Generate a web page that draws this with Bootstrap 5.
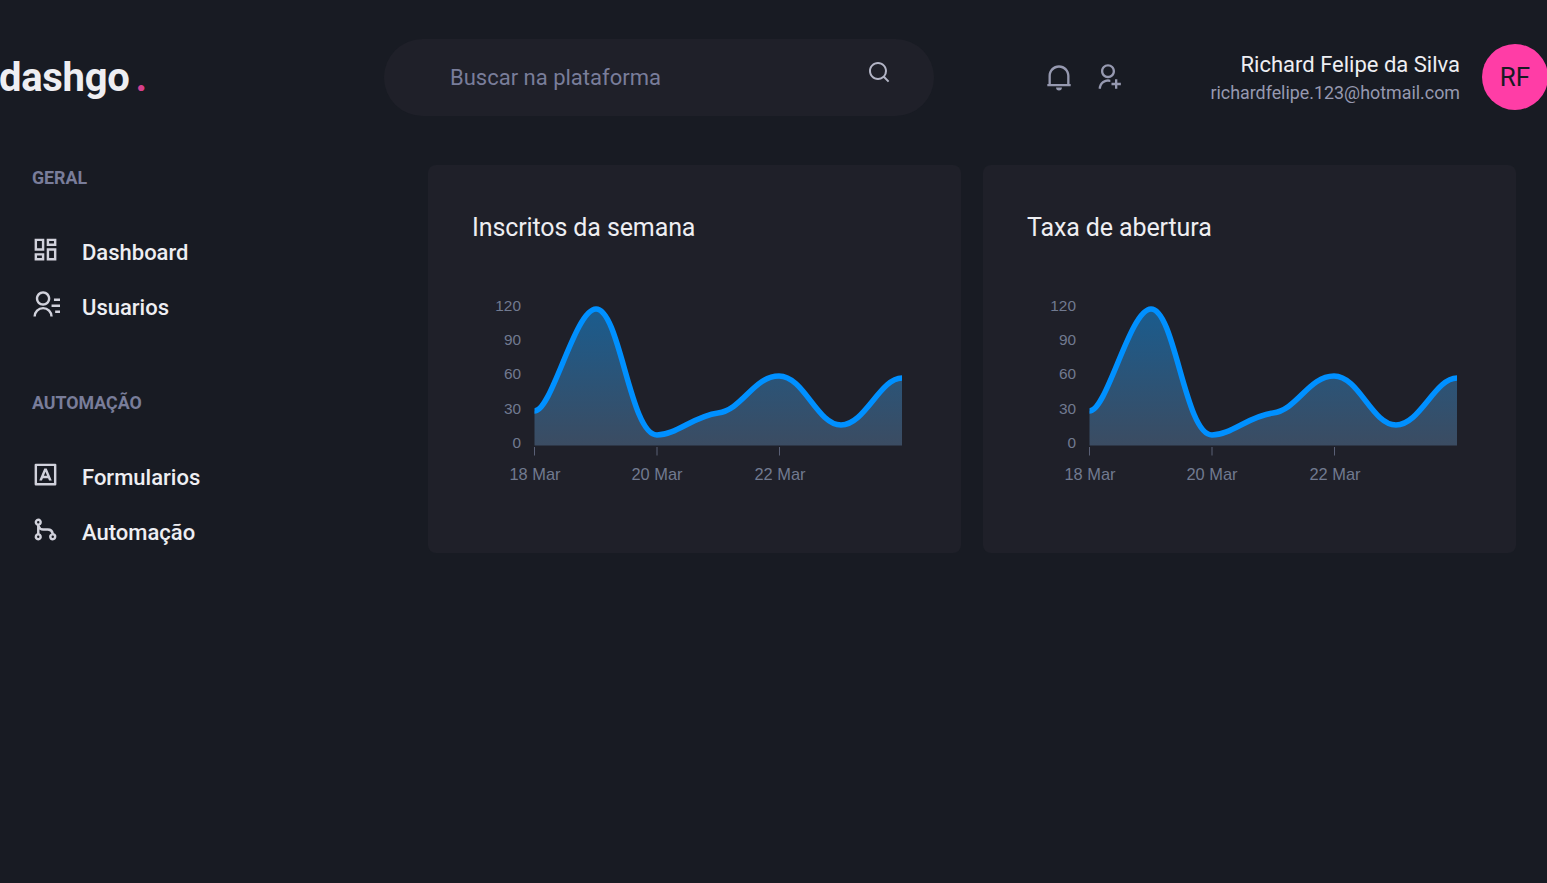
<!DOCTYPE html>
<html lang="pt-BR">
<head>
    <meta charset="UTF-8">
    <meta name="viewport" content="width=device-width, initial-scale=1.0">
    <title>dashgo</title>
    <link href="https://cdn.jsdelivr.net/npm/bootstrap@5.3.0/dist/css/bootstrap.min.css" rel="stylesheet">
    <style>
        html, body { height: 100%; overflow: hidden; }
        body { background: #181b23; color: #eeeef2; font-family: Roboto, "Liberation Sans", sans-serif; }
        .topbar { height: 77px; margin-top: 39px; }
        .logo-box { width: 384px; }
        .logo { font-size: 40px; font-weight: 700; letter-spacing: -0.3px; line-height: 1; margin-left: -1px; color: #eeeef2; }
        .logo span { color: #d53f8c; margin-left: 6px; }
        .search-box { width: 550px; height: 77px; border-radius: 39px; background: #1f2029; padding: 0 43px 0 66px; }
        .search-box input { background: transparent; border: 0; outline: 0; color: #eeeef2; font-size: 22px; width: 100%; padding: 0; }
        .search-box input::placeholder { color: #797d9a; opacity: 1; }
        .search-box svg { width: 24px; height: 24px; fill: #b3b5c6; margin-top: -12px; flex-shrink: 0; }
        .top-icons { margin-left: 111px; margin-bottom: 2px; gap: 21px; }
        .top-icons svg { width: 28px; height: 28px; fill: #9699b0; }
        .user-box { margin-left: auto; margin-right: -1px; gap: 22px; }
        .user-text { margin-top: 2px; }
        .user-name { font-size: 22px; line-height: 26px; color: #eeeef2; }
        .user-mail { font-size: 17.86px; line-height: 26px; margin-top: 2px; color: #9699b0; }
        .avatar { width: 66px; height: 66px; margin-bottom: 2px; padding-top: 2px; background: #ff3da6; color: #181b23; font-size: 26px; }
        .sidebar { width: 428px; padding: 48px 0 0 32px; flex-shrink: 0; }
        .side-title { font-size: 17.8px; font-weight: 700; line-height: 28px; color: #797d9a; margin-bottom: 33px; }
        .side-group { margin-bottom: 54px; }
        .side-link { height: 55px; gap: 22px; color: #eeeef2; font-size: 22px; font-weight: 500; text-decoration: none; }
        .side-link svg { width: 29px; height: 29px; fill: #d1d2dc; margin: -7px 0 0 -1px; flex-shrink: 0; }
        .content { gap: 22px; padding: 49px 32px 0 0; }
        .chart-card { flex: 1 1 0; height: 388px; background: #1f2029; border: 0; border-radius: 8px; padding: 44px; }
        .chart-card h2 { font-size: 25px; letter-spacing: -0.11px; font-weight: 400; line-height: 38px; color: #eeeef2; margin: 0 0 43px; }
        .chart { width: 445px; height: 200px; overflow: visible; display: block; }
        .chart text { font-family: "Liberation Sans", Arial, sans-serif; fill: #717a90; }
        .chart .y { font-size: 15.4px; text-anchor: end; }
        .chart .x { font-size: 16.4px; text-anchor: middle; }
        .chart .tick { stroke: #5a6076; stroke-width: 1; }
        .chart .line { fill: none; stroke: #0090ff; stroke-width: 5.5; }
    </style>
</head>
<body>
    <header class="topbar d-flex align-items-center">
        <div class="logo-box">
            <div class="logo">dashgo<span>.</span></div>
        </div>
        <div class="search-box d-flex align-items-center">
            <input type="text" placeholder="Buscar na plataforma">
            <svg viewBox="0 0 24 24"><path d="M18.031 16.617l4.283 4.282-1.415 1.415-4.282-4.283A8.96 8.96 0 0 1 11 20c-4.968 0-9-4.032-9-9s4.032-9 9-9 9 4.032 9 9a8.96 8.96 0 0 1-1.969 5.617zm-2.006-.742A6.977 6.977 0 0 0 18 11c0-3.868-3.142-7-7-7-3.867 0-7 3.132-7 7 0 3.858 3.133 7 7 7a6.977 6.977 0 0 0 4.875-1.975l.15-.15z"/></svg>
        </div>
        <div class="top-icons d-flex align-items-center">
            <svg viewBox="0 0 24 24"><path d="M22 20H2v-2h1v-6.969C3 6.043 7.03 2 12 2s9 4.043 9 9.031V18h1v2zM5 18h14v-6.969C19 7.148 15.866 4 12 4s-7 3.148-7 7.031V18zm4.5 3h5a2.5 2.5 0 1 1-5 0z"/></svg>
            <svg viewBox="0 0 24 24"><path d="M14 14.252v2.09A6 6 0 0 0 6 22l-2-.001a8 8 0 0 1 10-7.748zM12 13c-3.315 0-6-2.685-6-6s2.685-6 6-6 6 2.685 6 6-2.685 6-6 6zm0-2c2.21 0 4-1.79 4-4s-1.79-4-4-4-4 1.79-4 4 1.79 4 4 4zm6 6v-3h2v3h3v2h-3v3h-2v-3h-3v-2h3z"/></svg>
        </div>
        <div class="user-box d-flex align-items-center">
            <div class="user-text text-end">
                <div class="user-name">Richard Felipe da Silva</div>
                <div class="user-mail">richardfelipe.123@hotmail.com</div>
            </div>
            <div class="avatar rounded-circle d-flex align-items-center justify-content-center">RF</div>
        </div>
    </header>

    <div class="d-flex">
        <aside class="sidebar">
            <div class="side-group">
                <div class="side-title">GERAL</div>
                <a class="side-link d-flex align-items-center" href="#">
                    <svg viewBox="0 0 24 24"><path d="M13 21V11h8v10h-8zM3 13V3h8v10H3zm6-2V5H5v6h4zM3 21v-6h8v6H3zm2-2h4v-2H5v2zm10 0h4v-6h-4v6zM13 3h8v6h-8V3zm2 2v2h4V5h-4z"/></svg>
                    Dashboard
                </a>
                <a class="side-link d-flex align-items-center" href="#">
                    <svg viewBox="0 0 24 24"><path d="M19 7h5v2h-5V7zm-2 5h7v2h-7v-2zm3 5h4v2h-4v-2zM2 22a8 8 0 1 1 16 0h-2a6 6 0 1 0-12 0H2zm8-9c-3.315 0-6-2.685-6-6s2.685-6 6-6 6 2.685 6 6-2.685 6-6 6zm0-2c2.21 0 4-1.79 4-4s-1.79-4-4-4-4 1.79-4 4 1.79 4 4 4z"/></svg>
                    Usuarios
                </a>
            </div>
            <div class="side-group">
                <div class="side-title">AUTOMAÇÃO</div>
                <a class="side-link d-flex align-items-center" href="#">
                    <svg viewBox="0 0 24 24"><path d="M5 5v14h14V5H5zM4 3h16a1 1 0 0 1 1 1v16a1 1 0 0 1-1 1H4a1 1 0 0 1-1-1V4a1 1 0 0 1 1-1zm5.869 12l-.82 2H6.833L11 7h2l4.167 10H14.95l-.82-2H9.87zm.82-2h2.622L12 9.8 10.689 13z"/></svg>
                    Formularios
                </a>
                <a class="side-link d-flex align-items-center" href="#">
                    <svg viewBox="0 0 24 24"><path d="M7.105 8.79A3.001 3.001 0 0 0 10 11h4a5.001 5.001 0 0 1 4.927 4.146A3.001 3.001 0 0 1 18 21a3 3 0 0 1-1.105-5.79A3.001 3.001 0 0 0 14 13h-4a4.978 4.978 0 0 1-3-1v3.17a3.001 3.001 0 1 1-2 0V8.83a3.001 3.001 0 1 1 2.105-.04zM6 7a1 1 0 1 0 0-2 1 1 0 0 0 0 2zm0 12a1 1 0 1 0 0-2 1 1 0 0 0 0 2zm12 0a1 1 0 1 0 0-2 1 1 0 0 0 0 2z"/></svg>
                    Automação
                </a>
            </div>
        </aside>

        <main class="content d-flex flex-grow-1 align-items-start">
            <div class="card chart-card">
                <h2>Inscritos da semana</h2>
                <svg class="chart" viewBox="0 0 445 200">
                    <defs>
                        <linearGradient id="area1" gradientUnits="userSpaceOnUse" x1="0" y1="18" x2="0" y2="155">
                            <stop offset="0" stop-color="#1a5c8e"/>
                            <stop offset="1" stop-color="#3b4c62"/>
                        </linearGradient>
                    </defs>
                    <text class="y" x="49" y="21">120</text>
                    <text class="y" x="49" y="55">90</text>
                    <text class="y" x="49" y="89">60</text>
                    <text class="y" x="49" y="124">30</text>
                    <text class="y" x="49" y="158">0</text>
                    <path fill="url(#area1)" d="M62.5 121C80 121 103 19 124 19C148 19 158 145 185 145C204 145 222 126 246 123C270 120 282 86 307 86C332 86 345 135 369 135C393 135 408 88 430 88V155.5H62.5Z"/>
                    <path class="line" d="M62.5 121C80 121 103 19 124 19C148 19 158 145 185 145C204 145 222 126 246 123C270 120 282 86 307 86C332 86 345 135 369 135C393 135 408 88 430 88"/>
                    <path class="tick" d="M62.5 157v8.5M185 157v8.5M307.5 157v8.5"/>
                    <text class="x" x="63" y="190">18 Mar</text>
                    <text class="x" x="185" y="190">20 Mar</text>
                    <text class="x" x="308" y="190">22 Mar</text>
                </svg>
            </div>
            <div class="card chart-card">
                <h2>Taxa de abertura</h2>
                <svg class="chart" viewBox="0 0 445 200">
                    <defs>
                        <linearGradient id="area2" gradientUnits="userSpaceOnUse" x1="0" y1="18" x2="0" y2="155">
                            <stop offset="0" stop-color="#1a5c8e"/>
                            <stop offset="1" stop-color="#3b4c62"/>
                        </linearGradient>
                    </defs>
                    <text class="y" x="49" y="21">120</text>
                    <text class="y" x="49" y="55">90</text>
                    <text class="y" x="49" y="89">60</text>
                    <text class="y" x="49" y="124">30</text>
                    <text class="y" x="49" y="158">0</text>
                    <path fill="url(#area2)" d="M62.5 121C80 121 103 19 124 19C148 19 158 145 185 145C204 145 222 126 246 123C270 120 282 86 307 86C332 86 345 135 369 135C393 135 408 88 430 88V155.5H62.5Z"/>
                    <path class="line" d="M62.5 121C80 121 103 19 124 19C148 19 158 145 185 145C204 145 222 126 246 123C270 120 282 86 307 86C332 86 345 135 369 135C393 135 408 88 430 88"/>
                    <path class="tick" d="M62.5 157v8.5M185 157v8.5M307.5 157v8.5"/>
                    <text class="x" x="63" y="190">18 Mar</text>
                    <text class="x" x="185" y="190">20 Mar</text>
                    <text class="x" x="308" y="190">22 Mar</text>
                </svg>
            </div>
        </main>
    </div>

    <script src="https://cdn.jsdelivr.net/npm/bootstrap@5.3.0/dist/js/bootstrap.bundle.min.js"></script>
</body>
</html>
